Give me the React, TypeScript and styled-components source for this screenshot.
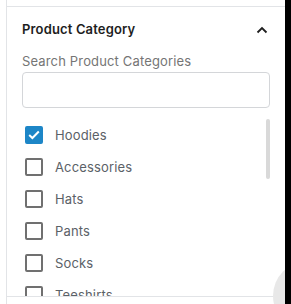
import React from 'react';
import styled, { createGlobalStyle } from 'styled-components';

const GlobalStyle = createGlobalStyle`
  html, body {
    margin: 0;
    padding: 0;
    background: #fff;
  }
  * {
    box-sizing: border-box;
  }
`;

const Page = styled.div`
  position: relative;
  display: flex;
  height: 304px;
  overflow: hidden;
  font-family: Inter, "Noto Sans", sans-serif;
`;

const Gutter = styled.div`
  width: 6px;
  flex-shrink: 0;
`;

const Sidebar = styled.div`
  flex: 1;
  display: flex;
  flex-direction: column;
  border-left: 1px solid #e2e4e7;
  min-width: 0;
`;

const PrevSection = styled.div`
  height: 6px;
  flex-shrink: 0;
`;

const EdgeStrip = styled.div`
  width: 6px;
  flex-shrink: 0;
  background: #000;
  position: relative;
  z-index: 2;
`;

const Section = styled.section`
  border-top: 1px solid #e2e4e7;
  border-bottom: 1px solid #e2e4e7;
  padding: 0 15px;
  display: flex;
  flex-direction: column;
  flex-shrink: 0;
`;

const Header = styled.div`
  height: 44px;
  display: flex;
  align-items: center;
  justify-content: space-between;
`;

const Title = styled.h2`
  margin: 0;
  font-size: 13px;
  font-weight: 600;
  color: #1e1e1e;
  letter-spacing: 0.15px;
`;

const Chevron = styled.svg`
  width: 12px;
  height: 8px;
  margin-right: 2px;
  margin-top: 1px;
`;

const Label = styled.label`
  margin-top: 2px;
  height: 16px;
  line-height: 16px;
  font-size: 13px;
  color: #757575;
  letter-spacing: 0.15px;
`;

const SearchInput = styled.input`
  margin-top: 3px;
  height: 36px;
  width: 100%;
  border: 1px solid #d4d6d9;
  border-radius: 4px;
  background: #fff;
  outline: none;
  font: inherit;
  padding: 0 8px;
`;

const List = styled.ul`
  position: relative;
  margin: 11px 0 0;
  padding: 0;
  list-style: none;
  height: 177px;
  overflow: hidden;
`;

const Thumb = styled.div`
  position: absolute;
  right: 0;
  top: 0;
  width: 4px;
  height: 60px;
  border-radius: 2px;
  background: #d9d9d9;
`;

const Row = styled.li`
  height: 32px;
  display: flex;
  align-items: center;
  gap: 12px;
  padding-left: 3px;
  font-size: 13px;
  color: #5b6167;
  letter-spacing: 0.15px;
`;

const Box = styled.span<{ $checked?: boolean }>`
  width: 18px;
  height: 18px;
  flex-shrink: 0;
  border-radius: 2px;
  display: flex;
  align-items: center;
  justify-content: center;
  border: 2px solid ${({ $checked }) => ($checked ? '#1d86c7' : '#707070')};
  background: ${({ $checked }) => ($checked ? '#1d86c7' : '#fff')};
`;

const Blob = styled.div`
  position: absolute;
  left: 273px;
  top: 261px;
  width: 70px;
  height: 70px;
  border-radius: 50%;
  background: #e8e8e8;
  z-index: 1;
`;

const categories = [
  { name: 'Hoodies', checked: true },
  { name: 'Accessories' },
  { name: 'Hats' },
  { name: 'Pants' },
  { name: 'Socks' },
  { name: 'Teeshirts' },
];

export default function App() {
  return (
    <>
      <GlobalStyle />
      <Page>
        <Gutter />
        <Sidebar>
          <PrevSection />
          <Section>
            <Header>
              <Title>Product Category</Title>
              <Chevron viewBox="0 0 12 8" fill="none">
                <path d="M1.5 6.5 L6 2 L10.5 6.5" stroke="#1e1e1e" strokeWidth="1.8" />
              </Chevron>
            </Header>
            <Label>Search Product Categories</Label>
            <SearchInput type="search" />
            <List>
              {categories.map((c) => (
                <Row key={c.name}>
                  <Box $checked={c.checked}>
                    {c.checked && (
                      <svg width="12" height="10" viewBox="0 0 12 10" fill="none">
                        <path d="M1.2 5 L4.4 8 L10.8 1.5" stroke="#fff" strokeWidth="2" />
                      </svg>
                    )}
                  </Box>
                  {c.name}
                </Row>
              ))}
              <Thumb />
            </List>
          </Section>
        </Sidebar>
        <EdgeStrip />
        <Blob />
      </Page>
    </>
  );
}
